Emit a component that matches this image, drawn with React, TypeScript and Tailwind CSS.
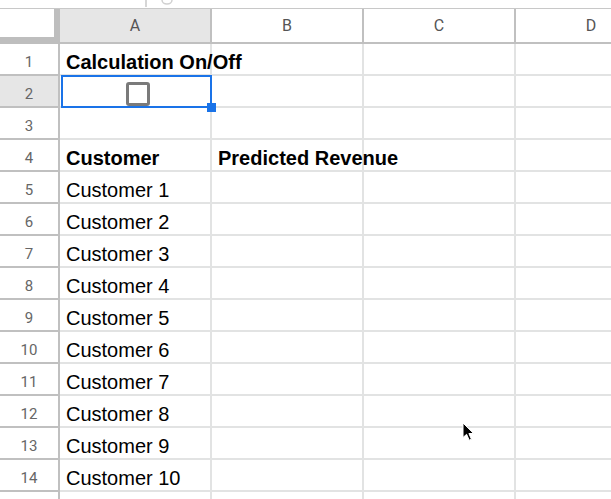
import React from "react";

const cols = ["A", "B", "C", "D"];

const rows: { a?: string; b?: string; bold?: boolean }[] = [
  { a: "Calculation On/Off", bold: true },
  {},
  {},
  { a: "Customer", b: "Predicted Revenue", bold: true },
  ...Array.from({ length: 10 }, (_, i) => ({ a: `Customer ${i + 1}` })),
  {},
];

function Cursor() {
  return (
    <svg
      className="absolute left-[462px] top-[422px] z-20"
      width="14"
      height="20"
      viewBox="0 0 14 20"
    >
      <path
        d="M1 1 L1 15.5 L4.6 12.3 L7.2 18.2 L9.4 17.2 L6.9 11.5 L11.6 11.5 Z"
        fill="#000"
        stroke="#fff"
        strokeWidth="1"
        strokeLinejoin="round"
      />
    </svg>
  );
}

export default function App() {
  return (
    <div
      className="relative h-[499px] w-[611px] overflow-hidden bg-white text-black"
      style={{ fontFamily: '"Liberation Sans", Arial, sans-serif' }}
    >
      {/* toolbar leftover at the very top */}
      <div className="flex h-[9px] items-start border-b border-[#c8c8c8]">
        <div className="ml-[145px] h-[7px] w-[2px] bg-[#d6d6d6]" />
        <svg className="ml-[14px]" width="12" height="5" viewBox="0 0 12 5">
          <path d="M1 0 A5 4 0 0 0 11 0" fill="none" stroke="#d0d0d0" strokeWidth="1.5" />
        </svg>
      </div>

      {/* column headers */}
      <div className="flex h-[35px] font-[Roboto,sans-serif]">
        <div className="h-[35px] w-[60px] shrink-0 bg-[#bebebe]">
          <div className="h-[28px] w-[54px] bg-white" />
        </div>
        {cols.map((c) => (
          <div
            key={c}
            className={`flex w-[152px] shrink-0 items-center justify-center border-r-2 border-b-2 border-[#c0c0c0] pt-[1px] text-[16px] text-[#555] ${
              c === "A" ? "bg-[#e6e6e6]" : "bg-white"
            }`}
          >
            {c}
          </div>
        ))}
      </div>

      {/* rows */}
      {rows.map((r, i) => (
        <div key={i} className="flex h-[32px]">
          <div
            className={`flex w-[60px] shrink-0 items-end justify-center border-r-2 border-b-2 border-[#c0c0c0] pb-[3px] font-[Roboto,sans-serif] text-[15px] leading-[17px] text-[#666] ${
              i === 1 ? "bg-[#e6e6e6]" : "bg-white"
            }`}
          >
            {i < 14 ? i + 1 : ""}
          </div>
          <div
            className={`relative flex w-[152px] shrink-0 items-end border-r-2 border-b-2 border-[#e2e3e3] pl-[6px] text-[20px] leading-[23px] ${
              r.bold ? "font-bold" : ""
            } ${i === 1 ? "z-10 items-center justify-center pl-0" : ""}`}
          >
            <span className="whitespace-nowrap">{r.a}</span>
            {i === 1 && (
              <>
                <div className="h-[24px] w-[24px] rounded-[3px] border-[3px] border-[#7a7a7a] bg-white" />
                <div className="absolute -top-[1px] -right-[2px] -bottom-[2px] left-[1px] border-[2.5px] border-[#1a73e8]">
                  <div className="absolute -right-[6px] -bottom-[6px] h-[9px] w-[9px] bg-[#1a73e8]" />
                </div>
              </>
            )}
          </div>
          <div
            className={`flex w-[152px] shrink-0 items-end border-r-2 border-b-2 border-[#e2e3e3] pl-[6px] text-[20px] leading-[23px] ${
              r.bold ? "font-bold" : ""
            }`}
          >
            <span className="whitespace-nowrap">{r.b}</span>
          </div>
          <div className="w-[152px] shrink-0 border-r-2 border-b-2 border-[#e2e3e3]" />
          <div className="w-[152px] shrink-0 border-r-2 border-b-2 border-[#e2e3e3]" />
        </div>
      ))}

      <Cursor />
    </div>
  );
}
